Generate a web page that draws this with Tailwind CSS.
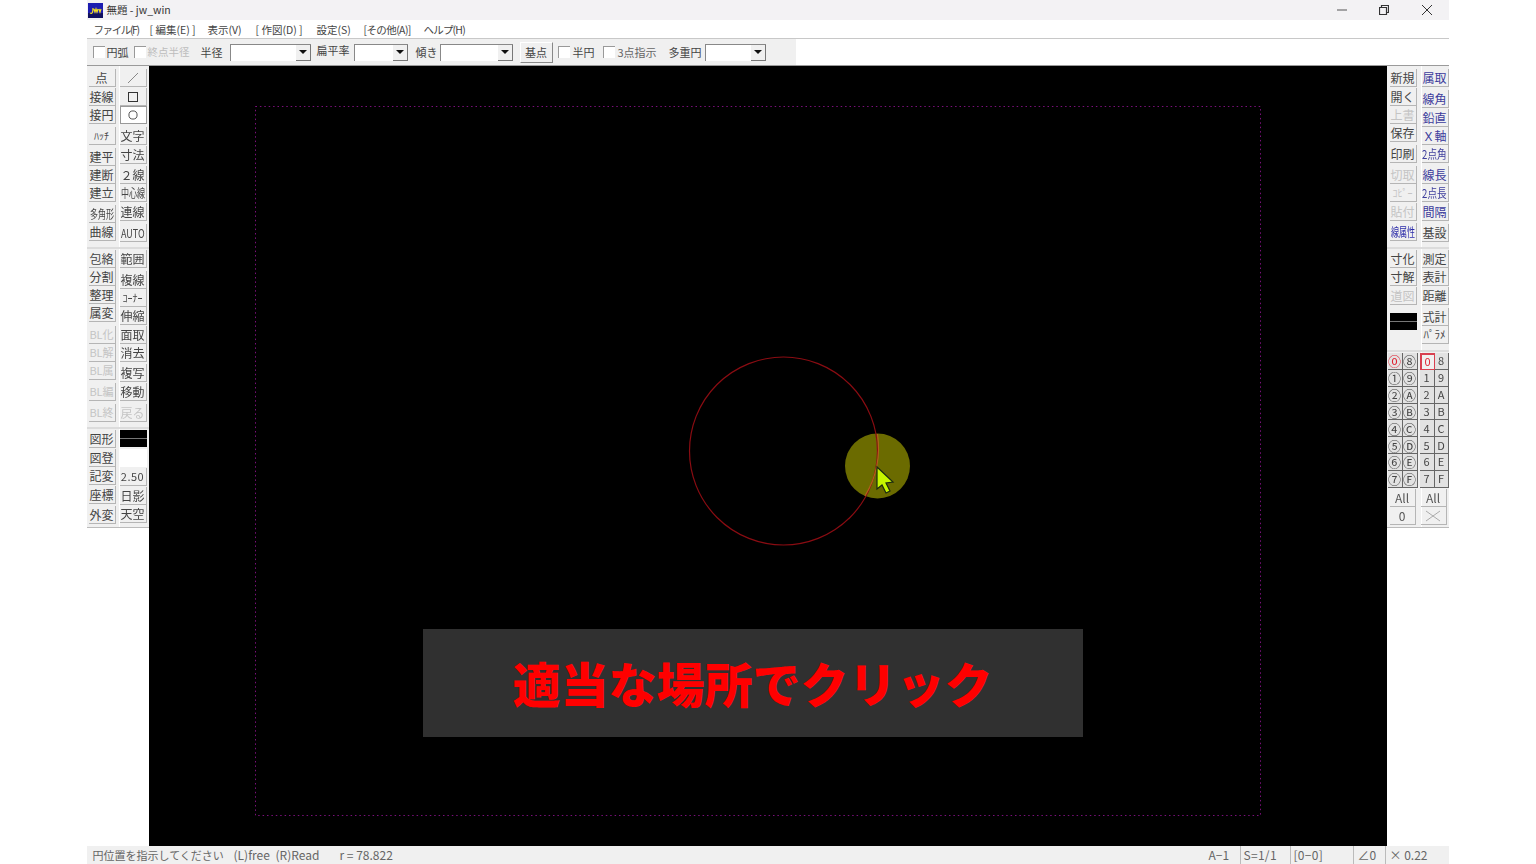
<!DOCTYPE html>
<html lang="ja">
<head>
<meta charset="utf-8">
<script src="https://cdn.jsdelivr.net/npm/@tailwindcss/browser@4"></script>
</head>
<body class="bg-white font-['Noto_Sans_CJK_JP','Noto_Sans',sans-serif]">
<div class="w-[1536px] h-[864px] overflow-hidden bg-white flex justify-center">
<div class="w-[1362px] ml-[-1px] h-full flex flex-col text-[#444] blur-[0.35px]">

<!-- title bar -->
<div class="h-5 bg-[#f3f2f4] flex items-center shrink-0">
  <svg class="ml-px w-[15px] h-[15px]" viewBox="0 0 15 15"><rect width="15" height="15" fill="#1c1cb0"/><rect y="10" width="15" height="5" fill="#101060"/><path d="M2 10c2 1 3 0 3-5M6 6l1 3 1-3 1 3 1-3M11 6l1 3 1-3" stroke="#f5e020" stroke-width="1.2" fill="none"/></svg>
  <span class="ml-1 text-[10.5px] text-[#333]">無題 - jw_win</span>
  <div class="ml-auto flex items-center text-[#444]">
    <svg class="w-[10px] h-[10px] mr-[32px]" viewBox="0 0 10 10"><path d="M0 5h10" stroke="#555" stroke-width="1"/></svg>
    <svg class="w-[10px] h-[10px] mr-[33px]" viewBox="0 0 10 10"><path d="M.5 2.500h7v7h-7zM2.500 2.500v-2h7v7h-2" stroke="#333" stroke-width="1.2" fill="none"/></svg>
    <svg class="w-[10px] h-[10px] mr-[17px]" viewBox="0 0 10 10"><path d="M0 0l10 10M10 0L0 10" stroke="#333" stroke-width="1"/></svg>
  </div>
</div>

<!-- menu -->
<div class="h-[19px] pt-[2px] bg-white border-b border-[#c8c8c8] flex items-center text-[10.5px] text-[#444] shrink-0 leading-none">
  <span class="ml-[7px] w-[42px] whitespace-nowrap tracking-[-1.4px]">ファイル(F)</span>
  <span class="ml-[14px] w-[45px] whitespace-nowrap">[ 編集(E) ]</span>
  <span class="ml-[13px] w-[35px] whitespace-nowrap">表示(V)</span>
  <span class="ml-[13px] w-[48px] whitespace-nowrap">[ 作図(D) ]</span>
  <span class="ml-[13px] w-[34px] whitespace-nowrap">設定(S)</span>
  <span class="ml-[13px] w-[47px] whitespace-nowrap tracking-[-0.6px]">[その他(A)]</span>
  <span class="ml-[13px] w-[41px] whitespace-nowrap tracking-[-0.8px]">ヘルプ(H)</span>
</div>

<!-- toolbar -->
<div class="h-[27px] shrink-0 flex bg-white border-b border-[#9a9a9a]">
  <div class="w-[709px] bg-[#f0f0f0] flex items-center text-[11px] leading-none whitespace-nowrap">
    <span class="ml-[6px] w-3 h-3 bg-white border-t border-l border-[#999]"></span>
    <span class="ml-[2px] w-[22px]">円弧</span>
    <span class="ml-[5px] w-3 h-3 bg-white border-t border-l border-[#999]"></span>
    <span class="ml-[2px] w-[42px] text-[10.5px] text-[#bdbdbd]">終点半径</span>
    <span class="ml-[11px] w-[22px]">半径</span>
    <span class="ml-[7px] w-[81px] h-[17px] bg-white border-t border-l border-[#888] flex justify-end"><span class="w-[15px] h-full bg-[#f0f0f0] border-r border-b border-[#777] flex items-center justify-center"><svg class="w-2 h-1" viewBox="0 0 8 4"><path d="M0 0h8L4 4z" fill="#111"/></svg></span></span>
    <span class="ml-[6px] w-[34px] -mt-[3px]">扁平率</span>
    <span class="ml-[3px] w-[54px] h-[17px] bg-white border-t border-l border-[#888] flex justify-end"><span class="w-[15px] h-full bg-[#f0f0f0] border-r border-b border-[#777] flex items-center justify-center"><svg class="w-2 h-1" viewBox="0 0 8 4"><path d="M0 0h8L4 4z" fill="#111"/></svg></span></span>
    <span class="ml-[8px] w-[20px]">傾き</span>
    <span class="ml-[4px] w-[73px] h-[17px] bg-white border-t border-l border-[#888] flex justify-end"><span class="w-[15px] h-full bg-[#f0f0f0] border-r border-b border-[#777] flex items-center justify-center"><svg class="w-2 h-1" viewBox="0 0 8 4"><path d="M0 0h8L4 4z" fill="#111"/></svg></span></span>
    <span class="ml-[7px] w-[33px] h-[21px] flex items-center justify-center border border-t-white border-l-white border-r-[#888] border-b-[#888]">基点</span>
    <span class="ml-[5px] w-3 h-3 bg-white border-t border-l border-[#999]"></span>
    <span class="ml-[3px] w-[21px]">半円</span>
    <span class="ml-[9px] w-3 h-3 bg-white border-t border-l border-[#999]"></span>
    <span class="ml-[3px] w-[39px] text-[#666]">3点指示</span>
    <span class="ml-[12px] w-[33px]">多重円</span>
    <span class="ml-[3px] w-[61px] h-[17px] bg-white border-t border-l border-[#888] flex justify-end"><span class="w-[15px] h-full bg-[#f0f0f0] border-r border-b border-[#777] flex items-center justify-center"><svg class="w-2 h-1" viewBox="0 0 8 4"><path d="M0 0h8L4 4z" fill="#111"/></svg></span></span>
  </div>
</div>

<!-- main -->
<div class="flex h-[780px] shrink-0">

  <!-- left tools -->
  <div class="w-[62px] shrink-0 relative">
    <div class="h-[462px] bg-[#f0f0f0] border-b border-[#bbb] flex pl-[2px] text-[12px] leading-none text-[#444]">
      <div class="w-[27px] flex flex-col pt-[3px] [&>div]:h-[18px] [&>div]:flex [&>div]:items-center [&>div]:justify-center [&>div]:border-r [&>div]:border-b [&>div]:border-[#b5b5b5] [&>div]:whitespace-nowrap">
        <div>点</div>
        <div class="mt-px">接線</div>
        <div>接円</div>
        <div class="mt-[3px] text-[10px]">ﾊｯﾁ</div>
        <div class="mt-[3px]">建平</div>
        <div>建断</div>
        <div>建立</div>
        <div class="mt-[3px]"><span class="inline-block scale-x-[0.67]">多角形</span></div>
        <div>曲線</div>
        <div class="mt-[9px]">包絡</div>
        <div>分割</div>
        <div>整理</div>
        <div>属変</div>
        <div class="mt-[4px] text-[#c4c4c4] text-[11px]">BL化</div>
        <div class="text-[#c4c4c4] text-[11px]">BL解</div>
        <div class="text-[#c4c4c4] text-[11px]">BL属</div>
        <div class="mt-[3px] text-[#c4c4c4] text-[11px]">BL編</div>
        <div class="mt-[3px] text-[#c4c4c4] text-[11px]">BL終</div>
        <div class="mt-[8px]">図形</div>
        <div class="mt-px">図登</div>
        <div>記変</div>
        <div class="mt-px">座標</div>
        <div class="mt-[2px]">外変</div>
      </div>
      <div class="ml-[3px] w-[28px] flex flex-col pt-[3px] border-l border-white [&>div]:h-[18px] [&>div]:flex [&>div]:items-center [&>div]:justify-center [&>div]:border-r [&>div]:border-b [&>div]:border-[#b5b5b5] [&>div]:whitespace-nowrap">
        <div><svg class="w-3 h-3" viewBox="0 0 12 12"><path d="M1 11L11 1" stroke="#888" stroke-width="1"/></svg></div>
        <div class="mt-px"><svg class="w-[10px] h-[10px]" viewBox="0 0 10 10"><rect x=".5" y=".5" width="9" height="9" fill="none" stroke="#333"/></svg></div>
        <div class="bg-white border-t border-l !border-[#999]"><svg class="w-[10px] h-[10px]" viewBox="0 0 11 11"><circle cx="5.500" cy="5.500" r="4.500" fill="none" stroke="#444"/></svg></div>
        <div class="mt-[3px]">文字</div>
        <div class="mt-px">寸法</div>
        <div class="mt-[2px]">２線</div>
        <div class="text-[12px]"><span class="inline-block scale-x-[0.67]">中心線</span></div>
        <div class="mt-px">連線</div>
        <div class="mt-[3px] text-[12px]"><span class="inline-block scale-x-[0.75]">AUTO</span></div>
        <div class="mt-[8px]">範囲</div>
        <div class="mt-[3px]">複線</div>
        <div class="text-[10px]">ｺｰﾅｰ</div>
        <div>伸縮</div>
        <div class="mt-px">面取</div>
        <div>消去</div>
        <div class="mt-[2px]">複写</div>
        <div class="mt-px">移動</div>
        <div class="mt-[3px] text-[#c4c4c4]">戻る</div>
        <div class="mt-[8px] !h-[17px] !border-0 bg-black flex-col"><span class="w-full h-px bg-[#777]"></span></div>
        <div class="mt-[2px] !h-[18px] !border-0 bg-white"></div>
        <div class="mt-px text-[11px] tracking-[0.5px]">2.50</div>
        <div class="mt-px">日影</div>
        <div>天空</div>
      </div>
    </div>
    <div class="absolute left-0 right-0 top-[181px] h-[2px] bg-[#dcdcdc]"></div>
    <div class="absolute left-0 right-0 top-[361px] h-[2px] bg-[#dcdcdc]"></div>
  </div>

  <!-- canvas -->
  <div class="w-[1238px] shrink-0 bg-black relative overflow-hidden">
    <svg class="absolute left-[106px] top-[40px] w-[1006px] h-[710px]" viewBox="0 0 1006 710"><rect x=".5" y=".5" width="1005" height="709" fill="none" stroke="#7a107a" stroke-width="1" stroke-dasharray="1.500 2.900"/></svg>
    <svg class="absolute left-[530px] top-[280px] w-[250px] h-[210px]" viewBox="0 0 250 210">
      <circle cx="198.500" cy="120" r="32.500" fill="#6b6b00"/>
      <circle cx="104.500" cy="105" r="94" fill="none" stroke="#8a0c12" stroke-width="1.200"/>
      <path d="M198.500 88A94 94 0 0 1 186 150" fill="none" stroke="#b0601a" stroke-width="1.200"/>
      <path d="M198 121l0 22 5-4 4 8 4-2-4-8 7-1z" fill="#c6f500" stroke="#1a2a10" stroke-width="1.200"/>
    </svg>
    <div class="absolute left-[274px] top-[563px] w-[660px] h-[108px] bg-[#303030] flex items-center justify-center">
      <span class="text-[48px] leading-none font-black text-[#ff0000] whitespace-nowrap -mt-[3px]">適当な場所でクリック</span>
    </div>
  </div>

  <!-- right tools -->
  <div class="w-[62px] shrink-0 relative">
    <div class="h-[462px] bg-[#f0f0f0] border-b border-[#bbb] flex pl-[3px] text-[12px] leading-none text-[#444]">
      <div class="w-[27px] flex flex-col pt-[3px] [&>div]:h-[18px] [&>div]:flex [&>div]:items-center [&>div]:justify-center [&>div]:border-r [&>div]:border-b [&>div]:border-[#b5b5b5] [&>div]:whitespace-nowrap">
        <div>新規</div>
        <div class="mt-px">開く</div>
        <div class="text-[#c4c4c4]">上書</div>
        <div>保存</div>
        <div class="mt-[3px]">印刷</div>
        <div class="mt-[3px] text-[#c4c4c4]">切取</div>
        <div class="text-[#c4c4c4] text-[10px]">ｺﾋﾟｰ</div>
        <div class="mt-px text-[#c4c4c4]">貼付</div>
        <div class="mt-[2px] text-[#2a2aa8]"><span class="inline-block scale-x-[0.67]">線属性</span></div>
        <div class="mt-[9px]">寸化</div>
        <div>寸解</div>
        <div class="mt-px text-[#c4c4c4]">道図</div>
        <div class="mt-[8px] !h-[17px] !border-0 bg-black flex-col"><span class="w-full h-px bg-[#777]"></span></div>
      </div>
      <div class="ml-[4px] w-[28px] flex flex-col pt-[3px] border-l border-white text-[#3c3c9c] [&>div]:h-[18px] [&>div]:flex [&>div]:items-center [&>div]:justify-center [&>div]:border-r [&>div]:border-b [&>div]:border-[#b5b5b5] [&>div]:whitespace-nowrap">
        <div>属取</div>
        <div class="mt-[3px]">線角</div>
        <div class="mt-px">鉛直</div>
        <div>Ｘ軸</div>
        <div><span class="inline-block scale-x-[0.8]">2点角</span></div>
        <div class="mt-[3px]">線長</div>
        <div><span class="inline-block scale-x-[0.8]">2点長</span></div>
        <div class="mt-px">間隔</div>
        <div class="mt-[3px] text-[#444]">基設</div>
        <div class="mt-[8px] text-[#444]">測定</div>
        <div class="text-[#444]">表計</div>
        <div class="mt-px text-[#444]">距離</div>
        <div class="mt-[3px] text-[#444]">式計</div>
        <div class="text-[#444] text-[11px]">ﾊﾟﾗﾒ</div>
      </div>
    </div>
    <div class="absolute left-0 right-0 top-[181px] h-[2px] bg-[#dcdcdc]"></div>
    <div class="absolute left-0 right-0 top-[284px] h-[2px] bg-[#dcdcdc]"></div>
    <!-- layer buttons lie over the panel's lower part -->
    <div class="absolute left-[1px] top-[287px] w-[61px] grid grid-cols-[15px_15px_17px_14px] gap-x-0 text-[13px] leading-none text-[#444] [&>span]:h-[16.85px] [&>span]:flex [&>span]:items-center [&>span]:justify-center [&>span]:bg-[#e2e2e2] [&>span]:border-r [&>span]:border-b [&>span]:border-[#666]">
      <span class="text-[#e02030]">⓪</span><span>⑧</span><span class="!bg-[#f0f0f0] ml-[2px] text-[11px] text-[#e02030] border-2 !border-[#d84050]">0</span><span class="text-[11px]">8</span>
      <span>①</span><span>⑨</span><span class="ml-[2px] text-[11px]">1</span><span class="text-[11px]">9</span>
      <span>②</span><span>Ⓐ</span><span class="ml-[2px] text-[11px]">2</span><span class="text-[11px]">A</span>
      <span>③</span><span>Ⓑ</span><span class="ml-[2px] text-[11px]">3</span><span class="text-[11px]">B</span>
      <span>④</span><span>Ⓒ</span><span class="ml-[2px] text-[11px]">4</span><span class="text-[11px]">C</span>
      <span>⑤</span><span>Ⓓ</span><span class="ml-[2px] text-[11px]">5</span><span class="text-[11px]">D</span>
      <span>⑥</span><span>Ⓔ</span><span class="ml-[2px] text-[11px]">6</span><span class="text-[11px]">E</span>
      <span>⑦</span><span>Ⓕ</span><span class="ml-[2px] text-[11px]">7</span><span class="text-[11px]">F</span>
    </div>
    <div class="absolute left-[3px] top-[423px] w-[58px] grid grid-cols-[26px_26px] gap-x-[5px] gap-y-0 text-[12px] leading-none text-[#555] [&>span]:h-[18px] [&>span]:flex [&>span]:items-center [&>span]:justify-center [&>span]:border-r [&>span]:border-b [&>span]:border-[#b5b5b5]">
      <span>All</span><span>All</span>
      <span>0</span><span><svg class="w-4 h-3" viewBox="0 0 16 12"><path d="M1 1l14 10M15 1L1 11" stroke="#aaa" stroke-width="1"/></svg></span>
    </div>
  </div>
</div>

<!-- status bar -->
<div class="h-[18px] shrink-0 bg-[#f0f0f0] flex items-center text-[11px] leading-none text-[#666] whitespace-nowrap">
  <span class="ml-[6px] w-[141px]">円位置を指示してください</span>
  <span class="w-[42px] text-[12px]">(L)free</span>
  <span class="w-[64px] text-[12px]">(R)Read</span>
  <span class="w-[867px] text-[12px]">r = 78.822</span>
  <span class="w-[34px] pl-[2px] border-r border-[#bbb] h-full flex items-center text-[12px]">A−1</span>
  <span class="w-[50px] pl-[3px] border-r border-[#bbb] h-full flex items-center text-[12px] tracking-[0.3px]">S=1/1</span>
  <span class="w-[63px] pl-[3px] border-r border-[#bbb] h-full flex items-center text-[12px] tracking-[0.3px]">[0−0]</span>
  <span class="w-[32px] pl-[4px] border-r border-[#bbb] h-full flex items-center text-[12px]">∠0</span>
  <span class="pl-[4px] text-[12px]">× 0.22</span>
</div>

</div>
</div>
</body>
</html>
